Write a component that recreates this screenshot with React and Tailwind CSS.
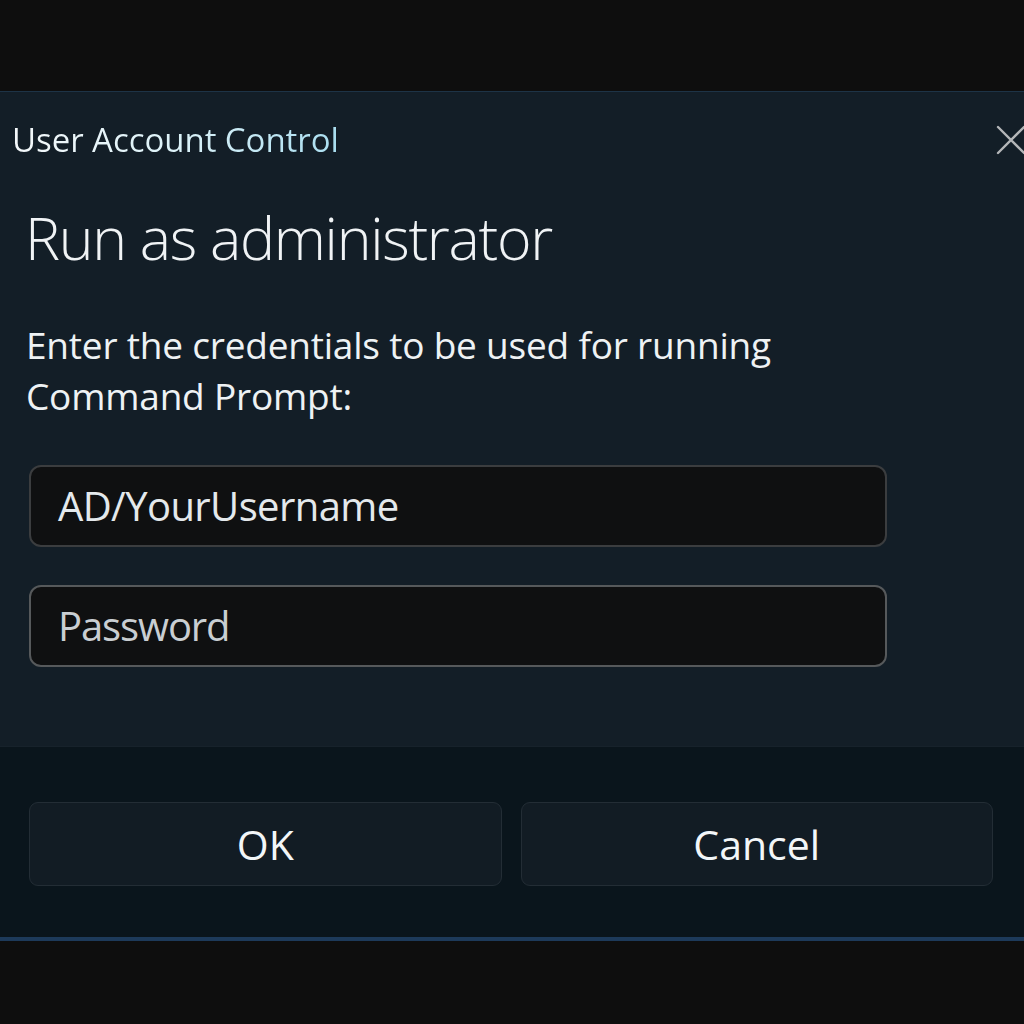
import React from 'react';

const font = { fontFamily: '"Open Sans", "Noto Sans", sans-serif' };

const CloseIcon = () => (
    <svg width="32" height="32" viewBox="0 0 32 32" className="shrink-0 -mr-[3px] mt-[1px]">
        <path d="M3 3 L29 29 M29 3 L3 29" stroke="#b4b6b8" strokeWidth="2.4" strokeLinecap="round" />
    </svg>
);

const Field = ({ text, className }) => (
    <div className={`ml-[29px] w-[858px] h-[82px] rounded-[12px] bg-[#0f1011] border-2 flex items-center pl-[27px] text-[40px] leading-none ${className}`}>
        {text}
    </div>
);

const Button = ({ label }) => (
    <button className="flex-1 h-[84px] rounded-[9px] bg-[#121c24] border border-[#232d35] text-[#f2f6f8] text-[41px] leading-none flex items-center justify-center">
        {label}
    </button>
);

export default function App() {
    return (
        <div style={font} className="w-[1024px] h-[1024px] bg-[#0e0e0e] flex flex-col overflow-hidden">
            <div className="h-[91px] shrink-0" />

            {/* dialog */}
            <div className="flex flex-col border-t border-[#1d3346]">
                {/* main body */}
                <div className="h-[654px] bg-[#131e27] flex flex-col">
                    <div className="flex items-start justify-between pl-[12px] pt-[31px]">
                        <span className="text-[33px] leading-none tracking-[-0.05px] bg-gradient-to-r from-[#f4f8fa] via-[#dcf2f8] to-[#a9def0] bg-clip-text text-transparent">
                            User Account Control
                        </span>
                        <CloseIcon />
                    </div>

                    <h1 className="ml-[25px] mt-[52px] text-[59px] leading-none font-light text-[#f0f3f5] tracking-[-1.3px]">
                        Run as administrator
                    </h1>

                    <p className="ml-[26px] mt-[52px] text-[37px] leading-[51px] text-[#eef2f4] tracking-[-0.2px]">
                        Enter the credentials to be used for running
                        <br />
                        Command Prompt:
                    </p>

                    <div className="mt-[44px] flex flex-col gap-[38px]">
                        <Field text="AD/YourUsername" className="border-[#3b3d3f] text-[#e4e9ec] tracking-[-0.6px]" />
                        <Field text="Password" className="border-[#56595b] text-[#c9ced2] tracking-[-1.1px]" />
                    </div>
                </div>

                {/* footer */}
                <div className="h-[191px] bg-[#0a151c] border-t border-[#17222b] flex gap-[19px] pl-[29px] pr-[31px] pt-[55px]">
                    <Button label="OK" />
                    <Button label="Cancel" />
                </div>
                <div className="h-[4px] bg-[#1d3a5a]" />
            </div>
        </div>
    );
}
